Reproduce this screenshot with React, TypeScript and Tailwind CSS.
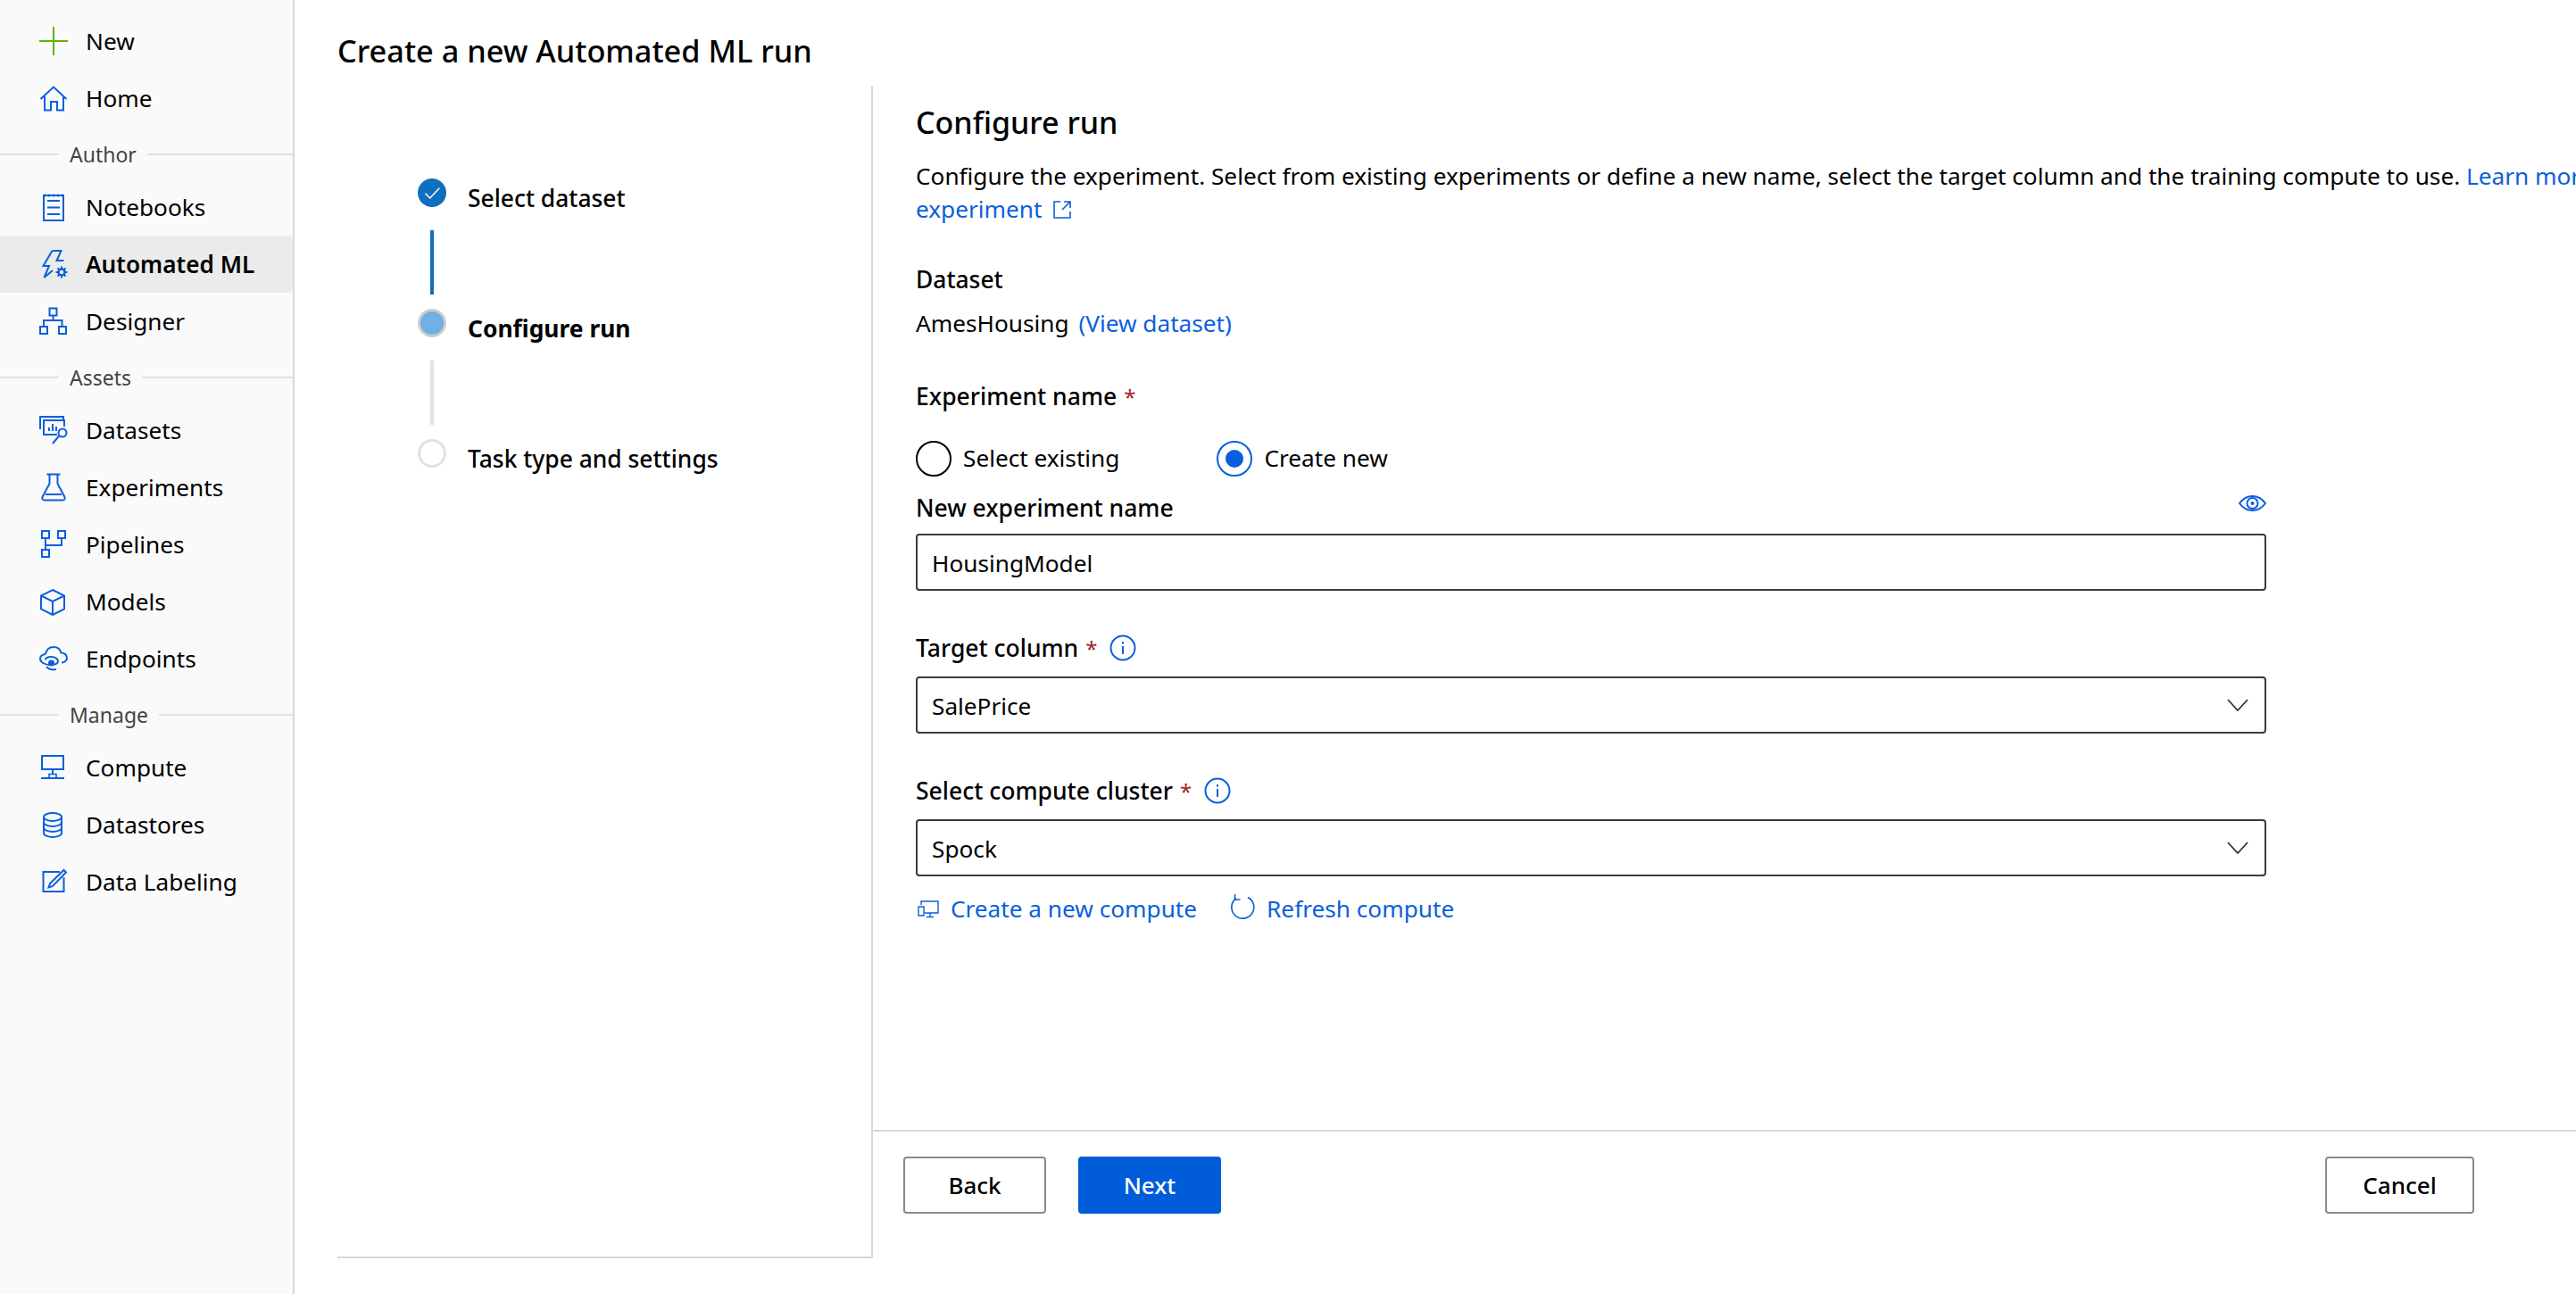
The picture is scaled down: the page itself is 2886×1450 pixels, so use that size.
import type { ReactNode } from "react";

const BLUE = "#0b5fdc";

function Icon({ className = "", children }: { className?: string; children: ReactNode }) {
  return (
    <svg viewBox="0 0 32 32" fill="none" stroke={BLUE} strokeWidth={2} className={`h-8 w-8 shrink-0 ${className}`}>
      {children}
    </svg>
  );
}

const HomeIcon = () => (
  <Icon>
    <path d="M1.500 17 16 3.500 30.500 17" />
    <path d="M6 14v15.500h7V20h7v9.500h7V14" />
  </Icon>
);

const NotebookIcon = () => (
  <Icon>
    <path d="M5 3h22v28H5z" />
    <path d="M6 1.500v3M11 1.500v3M16 1.500v3M21 1.500v3M26 1.500v3" strokeWidth={1.500} />
    <path d="M9 9h14M9 16.500h14M9 24h14" />
  </Icon>
);

const AutoMlIcon = () => (
  <Icon>
    <path d="M14.500 1 4.500 18H11L5.500 31 15 23" />
    <path d="M14.500 1H24.500L19.500 12H27.500" />
    <circle cx="25" cy="25" r="3.500" strokeWidth={2.400} />
    <path
      d="M25 18.500v3M25 28.500v3M18.500 25h3M28.500 25h3M20.500 20.500l2 2M27.500 27.500l2 2M20.500 29.500l2-2M27.500 22.500l2-2"
      strokeWidth={2}
    />
  </Icon>
);

const DesignerIcon = () => (
  <Icon>
    <path d="M11.500 1.500h8v8h-8zM1 22h8v8H1zM22 22h8v8h-8z" />
    <path d="M15.500 9.500V15M5 22v-7h20.500v7" />
  </Icon>
);

const DatasetsIcon = () => (
  <Icon>
    <path d="M1 15V1h26v4" />
    <path d="M20 21H5V5h23v7" />
    <path d="M11 17v-4M15 17v-8M19 17v-5" />
    <circle cx="26" cy="19" r="4.500" />
    <path d="M22.500 22 15 31" />
  </Icon>
);

const FlaskIcon = () => (
  <Icon>
    <path d="M8.500 1.500h15M11.500 1.500V12L3.500 27c-.8 2 .3 3.500 2.500 3.500h20c2.200 0 3.300-1.500 2.500-3.500L20.500 12V1.500" />
    <path d="M7 24h18" />
  </Icon>
);

const PipelinesIcon = () => (
  <Icon>
    <path d="M3 1h8v8H3zM21 1h8v8h-8zM3 22h8v8H3z" />
    <path d="M7 9v13M7 17h18V9" />
  </Icon>
);

const ModelsIcon = () => (
  <Icon>
    <path d="M15 3l13 6.500v15L15 31 2 24.500v-15z" />
    <path d="M2 9.500 15 16l13-6.500M15 16v15" />
  </Icon>
);

const EndpointsIcon = () => (
  <Icon>
    <path d="M7 11c1-5 4.500-8 9-8s7.500 3 8.500 6.500c3.500 0 6.500 2.500 6.500 5.500s-2.500 5.500-6 5.500" />
    <path d="M7 11c-4 .5-6 2.500-6 5 0 4 5 7 11 7 5 0 9-1.500 9-4s-3-5-7.500-5c-4 0-6.500 1.500-6.500 3.500" />
    <circle cx="13.500" cy="21" r="3.500" fill={BLUE} stroke="none" />
    <path d="M8 25c2 3 7 4 11 3" />
  </Icon>
);

const ComputeIcon = () => (
  <Icon>
    <path d="M3 3h24v15H3z" />
    <path d="M15 18v5M2 28h26" />
    <path d="M11 28v-4.500h8V28" strokeWidth={1.600} />
  </Icon>
);

const DatastoresIcon = () => (
  <Icon>
    <ellipse cx="15" cy="7.500" rx="10" ry="4.500" />
    <path d="M5 7.500v18c0 2.500 4.500 4.500 10 4.500s10-2 10-4.500v-18" />
    <path d="M5 13.500c0 2.500 4.500 4.500 10 4.500s10-2 10-4.500M5 19.500c0 2.500 4.500 4.500 10 4.500s10-2 10-4.500" />
  </Icon>
);

const LabelingIcon = () => (
  <Icon>
    <path d="M23 5H4.500v22h23V11" />
    <path d="M27.500 3 30 5.500 15 21l-4.500 1.500L12 18z" />
  </Icon>
);

type NavEntry = { label: string; icon: ReactNode; active?: boolean };

const topItems: NavEntry[] = [
  {
    label: "New",
    icon: (
      <svg viewBox="0 0 32 32" fill="none" stroke="#5fb404" strokeWidth={2} className="h-8 w-8 shrink-0">
        <path d="M16 0v32M0 16h32" />
      </svg>
    ),
  },
  { label: "Home", icon: <HomeIcon /> },
];

const sections: { title: string; items: NavEntry[] }[] = [
  {
    title: "Author",
    items: [
      { label: "Notebooks", icon: <NotebookIcon /> },
      { label: "Automated ML", icon: <AutoMlIcon />, active: true },
      { label: "Designer", icon: <DesignerIcon /> },
    ],
  },
  {
    title: "Assets",
    items: [
      { label: "Datasets", icon: <DatasetsIcon /> },
      { label: "Experiments", icon: <FlaskIcon /> },
      { label: "Pipelines", icon: <PipelinesIcon /> },
      { label: "Models", icon: <ModelsIcon /> },
      { label: "Endpoints", icon: <EndpointsIcon /> },
    ],
  },
  {
    title: "Manage",
    items: [
      { label: "Compute", icon: <ComputeIcon /> },
      { label: "Datastores", icon: <DatastoresIcon /> },
      { label: "Data Labeling", icon: <LabelingIcon /> },
    ],
  },
];

function NavRow({ item }: { item: NavEntry }) {
  return (
    <div
      className={`flex h-16 items-center gap-5 rounded-r pl-11 text-[26.200px] text-black ${
        item.active ? "bg-[#ebebeb] font-semibold" : ""
      }`}
    >
      {item.icon}
      <span className="mt-[2px]">{item.label}</span>
    </div>
  );
}

function Sidebar() {
  return (
    <nav className="h-full w-[330px] shrink-0 border-r-2 border-[#d8d8d8] bg-[#fafafa] pt-[14px]">
      {topItems.map((item) => (
        <NavRow key={item.label} item={item} />
      ))}
      {sections.map((section) => (
        <div key={section.title}>
          <div className="flex h-[58px] items-center pt-[4px]">
            <div className="h-[2px] w-[66px] bg-[#e1e1e1]" />
            <span className="px-3 text-[23px] text-[#444444]">{section.title}</span>
            <div className="h-[2px] flex-1 bg-[#e1e1e1]" />
          </div>
          {section.items.map((item) => (
            <NavRow key={item.label} item={item} />
          ))}
        </div>
      ))}
    </nav>
  );
}

function Stepper() {
  return (
    <div className="h-full w-[600px] shrink-0 border-r-2 border-b-2 border-[#d6d6d6] pt-[104px] pl-[90px]">
      <div className="flex h-8 gap-6">
        <div className="flex h-8 w-8 shrink-0 items-center justify-center rounded-full bg-[#106ebe]">
          <svg viewBox="0 0 16 16" fill="none" stroke="white" strokeWidth={1} className="h-6 w-6">
            <path d="M3 8.500 6.500 12 13.500 4.500" />
          </svg>
        </div>
        <span className="mt-[3px] text-[26.400px] leading-[38px] font-medium text-black">Select dataset</span>
      </div>
      <div className="mt-[26px] ml-[14px] h-[72px] w-1 bg-[#106ebe]" />
      <div className="mt-4 flex h-8 gap-6">
        <div className="h-8 w-8 shrink-0 rounded-full border-[3px] border-[#cccccc] bg-[#71afe5]" />
        <span className="mt-[3px] text-[26.400px] leading-[38px] font-bold text-black">Configure run</span>
      </div>
      <div className="mt-[26px] ml-[14px] h-[72px] w-1 bg-[#e1e1e1]" />
      <div className="mt-4 flex h-8 gap-6">
        <div className="h-8 w-8 shrink-0 rounded-full border-[3px] border-[#e1e1e1] bg-white" />
        <span className="mt-[3px] text-[26.400px] leading-[38px] font-medium text-black">Task type and settings</span>
      </div>
    </div>
  );
}

function InfoIcon() {
  return (
    <svg viewBox="0 0 30 30" fill="none" stroke={BLUE} strokeWidth={2} className="h-[30px] w-[30px] shrink-0">
      <circle cx="15" cy="15" r="13.500" />
      <path d="M15 13v9" />
      <path d="M15 8v2.500" />
    </svg>
  );
}

function Chevron() {
  return (
    <svg viewBox="0 0 24 14" fill="none" stroke="#333333" strokeWidth={1.800} className="h-[14px] w-6">
      <path d="M1 1 12 13 23 1" />
    </svg>
  );
}

function SelectBox({ value }: { value: string }) {
  return (
    <div className="flex h-16 w-[1513px] items-center justify-between rounded border-2 border-[#3b3b3b] pr-[18px] pl-4 text-[26.200px] text-black">
      <span className="mt-1">{value}</span>
      <Chevron />
    </div>
  );
}

function FieldLabel({ children, required }: { children: ReactNode; required?: boolean }) {
  return (
    <span className="text-[26.500px] leading-[38px] font-medium text-black">
      {children}
      {required && <span className="ml-2 text-[24px] leading-none font-normal text-[#a4262c]">*</span>}
    </span>
  );
}

function Radio({ label, checked }: { label: string; checked?: boolean }) {
  return (
    <div className="flex items-center gap-[13px] text-[26.200px] text-black">
      <div
        className={`flex h-10 w-10 items-center justify-center rounded-full border-2 ${
          checked ? "border-[#0b5fdc]" : "border-black"
        }`}
      >
        {checked && <div className="h-5 w-5 rounded-full bg-[#0b5fdc]" />}
      </div>
      <span>{label}</span>
    </div>
  );
}

function Button({ children, primary, className = "" }: { children: ReactNode; primary?: boolean; className?: string }) {
  return (
    <button
      className={`h-16 rounded text-[26px] font-medium ${
        primary ? "bg-[#015cda] text-white" : "border-2 border-[#8a8a8a] bg-white text-black"
      } ${className}`}
    >
      {children}
    </button>
  );
}

function ConfigureForm() {
  return (
    <div className="flex-1 overflow-hidden pt-[21px] pl-12">
      <h2 className="text-[34px] leading-10 font-medium text-black">Configure run</h2>

      <p className="mt-[22px] text-[26.200px] leading-[37px] whitespace-nowrap text-black">
        Configure the experiment. Select from existing experiments or define a new name, select the target column and the
        training compute to use. <span className="text-[#0b5fdc]">Learn more about</span>
        <br />
        <span className="inline-flex items-center gap-[13px] text-[#0b5fdc]">
          experiment
          <svg viewBox="0 0 20 20" fill="none" stroke={BLUE} strokeWidth={1.600} className="h-5 w-5">
            <path d="M8 1H1v18h18v-7" />
            <path d="M12 1h7v7M19 1l-9 9" />
          </svg>
        </span>
      </p>

      <div className="mt-[41px] text-[26.400px] leading-[38px] font-medium text-black">Dataset</div>
      <div className="mt-[11px] text-[26.200px] leading-[38px] text-black">
        AmesHousing <span className="ml-1 text-[#0b5fdc]">(View dataset)</span>
      </div>

      <div className="mt-[44px]">
        <FieldLabel required>Experiment name</FieldLabel>
      </div>

      <div className="mt-[31px] flex h-10 gap-[109px]">
        <Radio label="Select existing" />
        <Radio label="Create new" checked />
      </div>

      <div className="mt-4 flex w-[1513px] items-center justify-between">
        <FieldLabel>New experiment name</FieldLabel>
        <svg viewBox="0 0 31 18" fill="none" stroke={BLUE} strokeWidth={2} className="mb-[10px] h-[18px] w-[31px]">
          <path d="M1 9C5 3.500 10 1 15.500 1S26 3.500 30 9c-4 5.500-9 8-14.500 8S5 14.500 1 9z" />
          <circle cx="15.500" cy="9" r="6" />
          <circle cx="15.500" cy="9" r="2" fill={BLUE} stroke="none" />
        </svg>
      </div>
      <div className="mt-[10px] flex h-16 w-[1513px] items-center rounded border-2 border-[#3b3b3b] pt-1 pl-4 text-[26.200px] text-black">
        HousingModel
      </div>

      <div className="mt-[45px] flex items-center gap-[14px]">
        <FieldLabel required>Target column</FieldLabel>
        <InfoIcon />
      </div>
      <div className="mt-[13px]">
        <SelectBox value="SalePrice" />
      </div>

      <div className="mt-[45px] flex items-center gap-[14px]">
        <FieldLabel required>Select compute cluster</FieldLabel>
        <InfoIcon />
      </div>
      <div className="mt-[13px]">
        <SelectBox value="Spock" />
      </div>

      <div className="mt-[18px] flex h-[38px] items-center text-[26.200px] text-[#0b5fdc]">
        <svg viewBox="0 0 24 20" fill="none" stroke={BLUE} strokeWidth={1.400} className="ml-[2px] h-5 w-6">
          <path d="M4 5V1h19v13H8" />
          <path d="M1 7h6v10H1zM14 14v4M10 18.500h8" />
        </svg>
        <span className="ml-[13px]">Create a new compute</span>
        <svg viewBox="0 0 28 28" fill="none" stroke={BLUE} strokeWidth={1.600} className="mb-[6px] ml-[38px] h-7 w-7">
          <path d="M19 3.500a12.500 12.500 0 1 1-13 1" />
          <path d="M4.500 0v6h6" />
        </svg>
        <span className="ml-3">Refresh compute</span>
      </div>
    </div>
  );
}

export default function App() {
  return (
    <div className="flex h-[1450px] w-full overflow-hidden bg-white font-['Noto_Sans',sans-serif]">
      <Sidebar />
      <main className="flex min-w-0 flex-1 flex-col pb-10">
        <div className="flex h-[96px] shrink-0 items-start pt-[35px] pl-12">
          <h1 className="text-[34.300px] leading-[44px] font-medium text-black">Create a new Automated ML run</h1>
        </div>
        <div className="ml-12 flex min-h-0 flex-1">
          <Stepper />
          <div className="flex min-w-0 flex-1 flex-col">
            <ConfigureForm />
            <div className="flex h-[144px] shrink-0 border-t-2 border-[#d6d6d6] pt-[28px] pl-[34px]">
              <Button className="w-40">Back</Button>
              <Button primary className="ml-[36px] w-40">
                Next
              </Button>
              <Button className="mr-[114px] ml-auto w-[167px]">Cancel</Button>
            </div>
          </div>
        </div>
      </main>
    </div>
  );
}
